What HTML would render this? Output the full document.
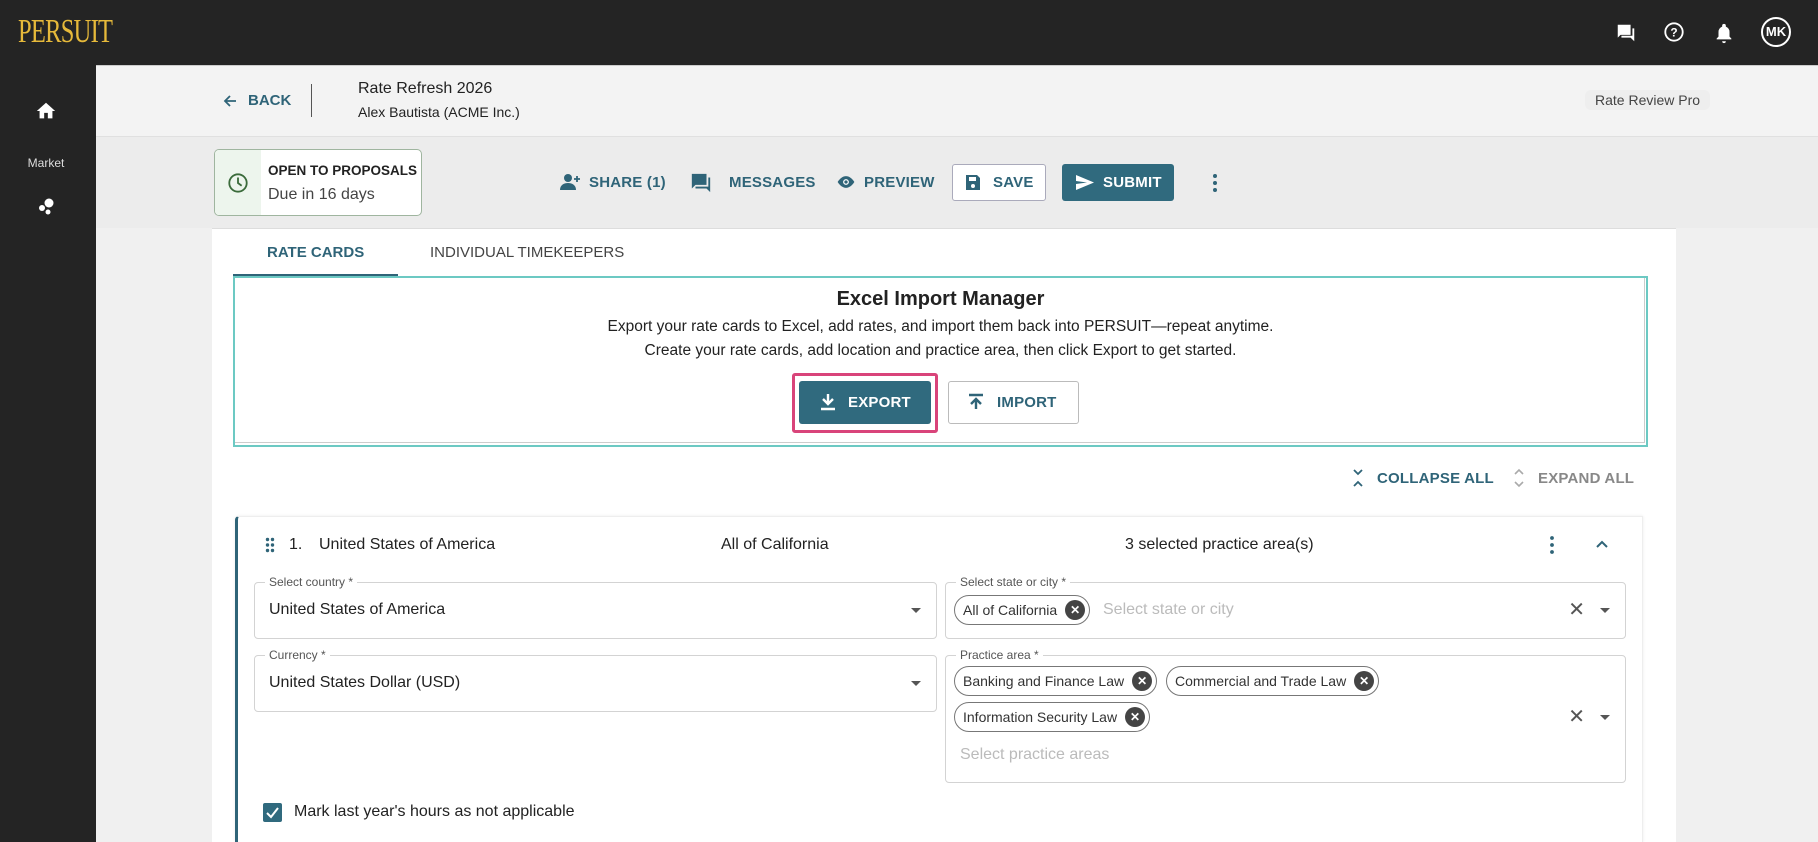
<!DOCTYPE html>
<html style="overflow:hidden;width:1818px;height:842px"><head><meta charset="utf-8"><style>
*{box-sizing:border-box;margin:0;padding:0}
body{width:1818px;height:842px;overflow:hidden;font-family:"Liberation Sans",sans-serif;background:#f0f0f0;position:relative;color:#222}
.abs{position:absolute}
.top{left:0;top:0;width:1818px;height:65px;background:#242424}
.side{left:0;top:65px;width:96px;height:777px;background:#242424}
.hdr{left:96px;top:65px;width:1722px;height:71px;background:#f3f3f3;border-top:1px solid #ccc}
.act{left:96px;top:136px;width:1722px;height:92px;background:#ececec;border-top:1px solid #e0e0e0}
.panel{left:212px;top:228px;width:1464px;height:614px;background:#fff;border-top:1px solid #ddd}
.teal{color:#2f6478}
.btxt{font-size:15px;font-weight:bold;letter-spacing:.2px}
.field{position:absolute;border:1px solid #d3d3d3;border-radius:4px}
.lab{position:absolute;top:-8px;left:10px;background:#fff;padding:0 4px;font-size:12px;color:#555}
.chip{position:absolute;height:30px;border:1px solid #777;border-radius:16px;font-size:14px;line-height:28px;padding:0 32px 0 8px;color:#333}
.chip i{position:absolute;right:4px;top:4px;width:20px;height:20px;border-radius:50%;background:#444;color:#fff;font-style:normal;font-size:12px;line-height:20px;text-align:center;font-weight:bold}
.caret{position:absolute;width:0;height:0;border-left:5px solid transparent;border-right:5px solid transparent;border-top:5px solid #555}
</style></head><body>
<div class="abs top"></div>
<div class="abs" style="left:18px;top:13px;font-family:'Liberation Serif',serif;font-size:34px;color:#e6b93a;letter-spacing:-1px;transform:scaleX(.72);transform-origin:left">PERSUIT</div>
<svg class="abs" style="left:1615px;top:22px" width="22" height="22" viewBox="0 0 24 24"><path fill="#fff" d="M3 3h14v11H6l-3 3z M19 7h2v14l-4-4H7v-2h12z"/></svg>
<svg class="abs" style="left:1663px;top:21px" width="22" height="22" viewBox="0 0 24 24"><circle cx="12" cy="12" r="9.5" fill="none" stroke="#fff" stroke-width="2"/><text x="12" y="17" font-size="13" fill="#fff" text-anchor="middle" font-family="Liberation Sans" font-weight="bold">?</text></svg>
<svg class="abs" style="left:1713px;top:21px" width="22" height="24" viewBox="0 0 24 24"><path fill="#fff" d="M12 2a2 2 0 0 1 2 2v1a6 6 0 0 1 4 6v5l2 2v1H4v-1l2-2v-5a6 6 0 0 1 4-6V4a2 2 0 0 1 2-2zM10 21h4a2 2 0 0 1-4 0z"/></svg>
<div class="abs" style="left:1761px;top:17px;width:30px;height:30px;border:2px solid #fff;border-radius:50%;color:#fff;font-size:13px;font-weight:bold;line-height:26px;text-align:center">MK</div>
<div class="abs side"></div>
<svg class="abs" style="left:35px;top:100px" width="22" height="22" viewBox="0 0 24 24"><path fill="#fff" d="M12 3 2 12h3v8h5v-6h4v6h5v-8h3z"/></svg>
<div class="abs" style="left:0;top:156px;width:92px;text-align:center;color:#ddd;font-size:12px">Market</div>
<svg class="abs" style="left:36px;top:196px" width="20" height="20" viewBox="0 0 20 20"><circle cx="13" cy="7" r="4.5" fill="#fff"/><circle cx="6" cy="12" r="3" fill="#fff"/><circle cx="12" cy="16" r="2.5" fill="#fff"/></svg>
<div class="abs hdr"></div>
<svg class="abs" style="left:222px;top:93px" width="16" height="16" viewBox="0 0 16 16"><path d="M14 8H3M8 3 3 8l5 5" stroke="#2f6478" stroke-width="1.8" fill="none"/></svg>
<div class="abs teal" style="left:248px;top:92px;font-size:15px;font-weight:bold">BACK</div>
<div class="abs" style="left:311px;top:84px;width:1px;height:33px;background:#555"></div>
<div class="abs" style="left:358px;top:80px;font-size:16px">Rate Refresh 2026</div>
<div class="abs" style="left:358px;top:104px;font-size:14px">Alex Bautista (ACME Inc.)</div>
<div class="abs" style="left:1585px;top:90px;font-size:14px;color:#444;background:#eee;padding:2px 10px;border-radius:6px">Rate Review Pro</div>
<div class="abs act"></div>
<div class="abs" style="left:214px;top:149px;width:208px;height:67px;border:1px solid #9fb59f;border-radius:5px;background:#fff;overflow:hidden">
 <div style="position:absolute;left:0;top:0;width:46px;height:67px;background:#edf5ed"></div>
 <svg style="position:absolute;left:12px;top:22px" width="22" height="22" viewBox="0 0 24 24"><circle cx="12" cy="12" r="9.5" fill="none" stroke="#3b6b3b" stroke-width="2"/><path d="M12 6v6l4 3" stroke="#3b6b3b" stroke-width="2" fill="none"/></svg>
 <div style="position:absolute;left:53px;top:13px;font-size:13.5px;font-weight:bold">OPEN TO PROPOSALS</div>
 <div style="position:absolute;left:53px;top:36px;font-size:16px;color:#444">Due in 16 days</div>
</div>
<svg class="abs" style="left:560px;top:173px" width="22" height="18" viewBox="0 0 22 18"><circle cx="8" cy="5" r="4" fill="#2f6478"/><path d="M0 17c0-5 4-7 8-7s8 2 8 7z" fill="#2f6478"/><path d="M17 3v6M14 6h6" stroke="#2f6478" stroke-width="1.8"/></svg>
<div class="abs teal btxt" style="left:589px;top:174px">SHARE (1)</div>
<svg class="abs" style="left:690px;top:172px" width="22" height="22" viewBox="0 0 24 24"><path fill="#2f6478" d="M2 2h16v12H6l-4 4zM20 6h2v16l-4-4H6v-2h14z"/></svg>
<div class="abs teal btxt" style="left:729px;top:174px">MESSAGES</div>
<svg class="abs" style="left:836px;top:174px" width="20" height="16" viewBox="0 0 24 16"><path d="M12 1C6 1 2 8 2 8s4 7 10 7 10-7 10-7-4-7-10-7z" fill="#2f6478"/><circle cx="12" cy="8" r="3.5" fill="#fff"/><circle cx="12" cy="8" r="2" fill="#2f6478"/></svg>
<div class="abs teal btxt" style="left:864px;top:174px">PREVIEW</div>
<div class="abs" style="left:952px;top:164px;width:94px;height:37px;background:#fff;border:1px solid #aab;border-radius:3px"></div>
<svg class="abs" style="left:965px;top:174px" width="16" height="17" viewBox="0 0 16 17"><path d="M1 1h11l3 3v12H1z" fill="#2f6478"/><rect x="4" y="3" width="7" height="4" fill="#fff"/><circle cx="8" cy="12" r="2" fill="#fff"/></svg>
<div class="abs teal btxt" style="left:993px;top:174px">SAVE</div>
<div class="abs" style="left:1062px;top:164px;width:112px;height:37px;background:#306a7e;border-radius:3px"></div>
<svg class="abs" style="left:1075px;top:174px" width="20" height="17" viewBox="0 0 20 17"><path d="M1 1l18 7.5L1 16l0-6 11-1.5L1 7z" fill="#fff"/></svg>
<div class="abs btxt" style="left:1103px;top:174px;color:#fff">SUBMIT</div>
<svg class="abs" style="left:1211px;top:172px" width="8" height="22" viewBox="0 0 8 22"><circle cx="4" cy="4" r="2" fill="#2f6478"/><circle cx="4" cy="11" r="2" fill="#2f6478"/><circle cx="4" cy="18" r="2" fill="#2f6478"/></svg>
<div class="abs panel"></div>
<div class="abs teal" style="left:267px;top:244px;font-size:15px;font-weight:bold">RATE CARDS</div>
<div class="abs" style="left:233px;top:274px;width:165px;height:2px;background:#2f6478"></div>
<div class="abs" style="left:430px;top:244px;font-size:15px;color:#444">INDIVIDUAL TIMEKEEPERS</div>
<div class="abs" style="left:233px;top:276px;width:1415px;height:171px;border:2px solid #6cc9c3;"></div>
<div class="abs" style="left:235px;top:278px;width:1410px;height:165px;border-bottom:1px solid #ccc;border-right:1px solid #ccc"></div>
<div class="abs" style="left:233px;top:288px;width:1415px;text-align:center;font-size:20px;font-weight:bold">Excel Import Manager</div>
<div class="abs" style="left:233px;top:318px;width:1415px;text-align:center;font-size:15.5px">Export your rate cards to Excel, add rates, and import them back into PERSUIT—repeat anytime.</div>
<div class="abs" style="left:233px;top:342px;width:1415px;text-align:center;font-size:15.5px">Create your rate cards, add location and practice area, then click Export to get started.</div>
<div class="abs" style="left:792px;top:373px;width:146px;height:60px;border:3px solid #d9447a;border-radius:3px"></div>
<div class="abs" style="left:799px;top:381px;width:132px;height:43px;background:#306a7e;border-radius:3px"></div>
<svg class="abs" style="left:820px;top:393px" width="16" height="18" viewBox="0 0 16 18"><path d="M8 1v9M3 6l5 5 5-5M1 16h14" stroke="#fff" stroke-width="2.4" fill="none"/></svg>
<div class="abs btxt" style="left:848px;top:394px;color:#fff">EXPORT</div>
<div class="abs" style="left:948px;top:381px;width:131px;height:43px;border:1px solid #bbb;border-radius:3px;background:#fff"></div>
<svg class="abs" style="left:968px;top:393px" width="16" height="18" viewBox="0 0 16 18"><path d="M8 16V7M3 11l5-5 5 5M1 2h14" stroke="#2f6478" stroke-width="2.4" fill="none"/></svg>
<div class="abs teal btxt" style="left:997px;top:394px">IMPORT</div>
<svg class="abs" style="left:1352px;top:468px" width="12" height="20" viewBox="0 0 12 20"><path d="M2 2l4 4 4-4M2 18l4-4 4 4" stroke="#2f6478" stroke-width="1.8" fill="none"/></svg>
<div class="abs teal btxt" style="left:1377px;top:470px">COLLAPSE ALL</div>
<svg class="abs" style="left:1513px;top:468px" width="12" height="20" viewBox="0 0 12 20"><path d="M2 6l4-4 4 4M2 14l4 4 4-4" stroke="#aaa" stroke-width="1.6" fill="none"/></svg>
<div class="abs btxt" style="left:1538px;top:470px;color:#888">EXPAND ALL</div>
<div class="abs" style="left:235px;top:516px;width:1408px;height:326px;border:1px solid #eee;border-bottom:none;border-left:3px solid #2f6478;border-radius:4px 0 0 0;box-shadow:0 0 3px rgba(0,0,0,.08)"></div>
<svg class="abs" style="left:265px;top:537px" width="10" height="16" viewBox="0 0 10 16"><g fill="#2f6478"><circle cx="2.5" cy="2.5" r="1.7"/><circle cx="7.5" cy="2.5" r="1.7"/><circle cx="2.5" cy="8" r="1.7"/><circle cx="7.5" cy="8" r="1.7"/><circle cx="2.5" cy="13.5" r="1.7"/><circle cx="7.5" cy="13.5" r="1.7"/></g></svg>
<div class="abs" style="left:289px;top:536px;font-size:16px">1.</div>
<div class="abs" style="left:319px;top:536px;font-size:16px">United States of America</div>
<div class="abs" style="left:721px;top:536px;font-size:16px">All of California</div>
<div class="abs" style="left:1125px;top:536px;font-size:16px">3 selected practice area(s)</div>
<svg class="abs" style="left:1548px;top:535px" width="8" height="20" viewBox="0 0 8 20"><circle cx="4" cy="3" r="1.9" fill="#2f6478"/><circle cx="4" cy="10" r="1.9" fill="#2f6478"/><circle cx="4" cy="17" r="1.9" fill="#2f6478"/></svg>
<svg class="abs" style="left:1595px;top:539px" width="14" height="10" viewBox="0 0 14 10"><path d="M2 8l5-5 5 5" stroke="#2f6478" stroke-width="2" fill="none"/></svg>
<div class="field" style="left:254px;top:582px;width:683px;height:57px"><span class="lab">Select country *</span><div style="position:absolute;left:14px;top:18px;font-size:16px">United States of America</div><div class="caret" style="right:15px;top:25px"></div></div>
<div class="field" style="left:254px;top:655px;width:683px;height:57px"><span class="lab">Currency *</span><div style="position:absolute;left:14px;top:18px;font-size:16px">United States Dollar (USD)</div><div class="caret" style="right:15px;top:25px"></div></div>
<div class="field" style="left:945px;top:582px;width:681px;height:57px"><span class="lab">Select state or city *</span>
 <div class="chip" style="left:8px;top:12px">All of California<i>✕</i></div>
 <div style="position:absolute;left:157px;top:18px;font-size:16px;color:#bbb">Select state or city</div>
 <div style="position:absolute;right:40px;top:14px;font-size:20px;color:#555">✕</div><div class="caret" style="right:15px;top:25px"></div></div>
<div class="field" style="left:945px;top:655px;width:681px;height:128px"><span class="lab">Practice area *</span>
 <div class="chip" style="left:8px;top:10px">Banking and Finance Law<i>✕</i></div>
 <div class="chip" style="left:220px;top:10px">Commercial and Trade Law<i>✕</i></div>
 <div class="chip" style="left:8px;top:46px">Information Security Law<i>✕</i></div>
 <div style="position:absolute;left:14px;top:90px;font-size:16px;color:#bbb">Select practice areas</div>
 <div style="position:absolute;right:40px;top:48px;font-size:20px;color:#555">✕</div><div class="caret" style="right:15px;top:59px"></div></div>
<div class="abs" style="left:263px;top:803px;width:19px;height:19px;background:#306a7e;border-radius:2px"></div>
<svg class="abs" style="left:265px;top:806px" width="15" height="13" viewBox="0 0 15 13"><path d="M2 7l4 4 7-9" stroke="#fff" stroke-width="2" fill="none"/></svg>
<div class="abs" style="left:294px;top:803px;font-size:16px">Mark last year's hours as not applicable</div>
</body></html>
